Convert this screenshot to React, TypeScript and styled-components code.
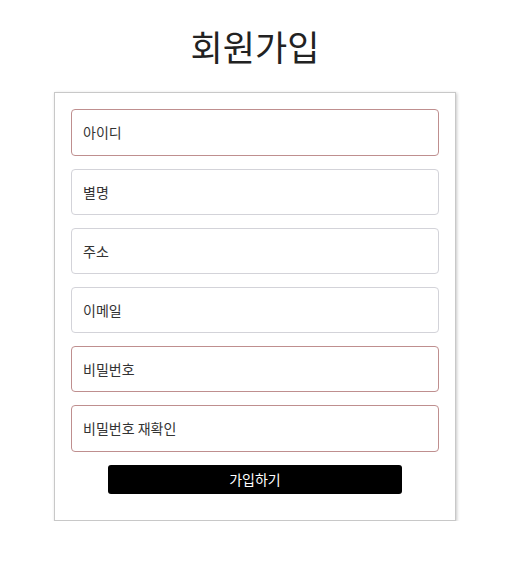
import React from "react";
import styled, { createGlobalStyle } from "styled-components";

const Global = createGlobalStyle`
  html, body { margin: 0; padding: 0; background: #fff; }
  body { font-family: "Noto Sans CJK KR", "Noto Sans", sans-serif; }
  * { box-sizing: border-box; }
`;

const Page = styled.div`
  width: 510px;
  display: flex;
  flex-direction: column;
  align-items: center;
  padding-top: 17px;
`;

const Title = styled.h1`
  margin: 0 0 17px 0;
  font-size: 35px;
  font-weight: 400;
  color: #222;
  line-height: 58px;
  font-family: "Noto Sans CJK KR", sans-serif;
`;

const Card = styled.form`
  width: 402px;
  border: 1px solid #c8c8c8;
  box-shadow: 1px 1px 3px rgba(0, 0, 0, 0.22);
  padding: 16.4px 16px 25.5px;
  display: flex;
  flex-direction: column;
  align-items: center;
  gap: 13px;
`;

const Field = styled.input<{ $invalid?: boolean }>`
  width: 368px;
  height: 46.2px;
  border: 1px solid ${(p) => (p.$invalid ? "#bf8f8f" : "#d3d3d9")};
  border-radius: 4px;
  padding: 0 11px;
  font-size: 14px;
  font-family: "Noto Sans CJK KR", sans-serif;
  color: #333;
  outline: none;
  &::placeholder { color: #333; }
`;

const Submit = styled.button`
  width: 294px;
  height: 29.5px;
  background: #000;
  color: #fff;
  border: none;
  border-radius: 3px;
  font-size: 14px;
  font-family: "Noto Sans CJK KR", sans-serif;
`;

const fields = [
  { ph: "아이디", invalid: true },
  { ph: "별명", invalid: false },
  { ph: "주소", invalid: false },
  { ph: "이메일", invalid: false },
  { ph: "비밀번호", invalid: true },
  { ph: "비밀번호 재확인", invalid: true },
];

export default function App() {
  return (
    <>
      <Global />
      <Page>
        <Title>회원가입</Title>
        <Card onSubmit={(e) => e.preventDefault()}>
          {fields.map((f) => (
            <Field key={f.ph} placeholder={f.ph} $invalid={f.invalid} />
          ))}
          <Submit type="submit">가입하기</Submit>
        </Card>
      </Page>
    </>
  );
}
